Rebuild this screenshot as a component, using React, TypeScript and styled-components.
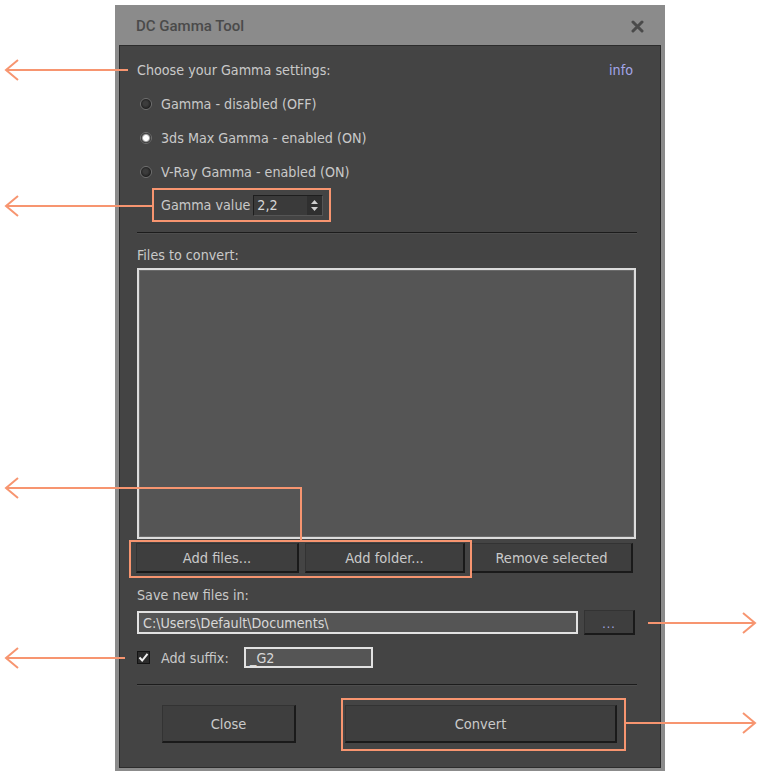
import React from 'react';
import styled, { createGlobalStyle } from 'styled-components';

const UI_FONT = '"DejaVu Sans Condensed", "DejaVu Sans", "Liberation Sans", sans-serif';

const Global = createGlobalStyle`
  html, body { margin: 0; padding: 0; background: #ffffff; }
  body { font-family: ${UI_FONT}; }
  * { box-sizing: border-box; }
`;

const Page = styled.div`
  position: relative;
  width: 761px;
  height: 775px;
  padding: 5px 0 0 115px;
`;

const Window = styled.div`
  width: 550px;
  height: 766px;
  background: #8b8b8b;
  display: flex;
  flex-direction: column;
  padding: 0 4px 3px;
`;

const TitleBar = styled.div`
  height: 40px;
  flex: none;
  display: flex;
  align-items: center;
  justify-content: space-between;
  padding: 2px 17px 0 17px;
  font-family: Roboto, "Liberation Sans", sans-serif;
  font-weight: 500;
  font-size: 15px;
  color: #4a4a4a;
`;

const Panel = styled.div`
  flex: 1;
  background: #444444;
  border: 1px solid #2c2c2c;
  padding: 16px 24px 0 17px;
  display: flex;
  flex-direction: column;
  font-size: 14.2px;
  color: #c9c9c9;
`;

const Label = styled.div<{ $mt?: number }>`
  height: 16px;
  line-height: 16px;
  margin-top: ${(p) => p.$mt ?? 0}px;
  white-space: nowrap;
`;

const HeaderRow = styled.div`
  display: flex;
  justify-content: space-between;
  height: 16px;
  line-height: 16px;
`;

const InfoLink = styled.span`
  color: #a3a6e8;
  margin-right: 3px;
`;

const RadioList = styled.div`
  margin-top: 16px;
  display: flex;
  flex-direction: column;
  gap: 14px;
`;

const RadioRow = styled.div`
  height: 20px;
  display: flex;
  align-items: center;
  gap: 9px;
  padding-left: 3px;
  white-space: nowrap;
`;

const RadioDot = styled.span<{ $on?: boolean }>`
  flex: none;
  width: 12px;
  height: 12px;
  border-radius: 50%;
  background: ${(p) =>
    p.$on
      ? 'radial-gradient(circle at 50% 50%, #ffffff 0 2.5px, #c4c4c4 3.2px, #2a2a2a 5px)'
      : 'radial-gradient(circle at 45% 45%, #3c3c3c 0 2px, #262626 5px)'};
  border: 1px solid #707070;
  box-shadow: inset 0 0 1px #000;
`;

const GammaRow = styled.div`
  margin-top: 12px;
  height: 22px;
  display: flex;
  align-items: center;
  padding-left: 24px;
  white-space: nowrap;
`;

const SpinBox = styled.div`
  margin-left: 3px;
  display: flex;
  height: 21px;
  border: 1px solid #1e1e1e;
  border-right-color: #555;
  border-bottom-color: #555;
`;

const SpinInput = styled.div`
  width: 53px;
  background: #3a3a3a;
  color: #d6d6d6;
  padding-left: 3px;
  line-height: 19px;
`;

const SpinArrows = styled.div`
  width: 15px;
  background: #2f2f2f;
  display: flex;
  align-items: center;
  justify-content: center;
`;

const Separator = styled.div<{ $mt: number }>`
  margin-top: ${(p) => p.$mt}px;
  margin-right: -1px;
  border-top: 1px solid #1c1c1c;
  border-bottom: 1px solid #4d4d4d;
`;

const ListBox = styled.div`
  margin-top: 5px;
  height: 271px;
  border: 2px solid #dcdcdc;
  outline: 1px solid #6a6a6a;
  outline-offset: -3px;
  background: #555555;
`;

const ButtonRow = styled.div`
  margin-top: 4px;
  margin-left: -1px;
  display: grid;
  grid-template-columns: 163px 160px 162px;
  column-gap: 6px;
`;

const Button = styled.button<{ $h?: number; $w?: number; $ml?: number }>`
  height: ${(p) => p.$h ?? 30}px;
  ${(p) => (p.$w ? `width: ${p.$w}px;` : '')}
  margin-left: ${(p) => p.$ml ?? 0}px;
  padding: 0;
  background: #3e3e3e;
  border: 1px solid #333333;
  border-right: 2px solid #1a1a1a;
  border-bottom: 2px solid #1a1a1a;
  color: #cacaca;
  font-family: ${UI_FONT};
  font-size: 14.5px;
`;

const DotsButton = styled(Button)`
  color: #a9aee6;
  font-size: 12px;
  letter-spacing: 1px;
  line-height: 1;
  padding-top: 4px;
`;

const PathRow = styled.div`
  margin-top: 7px;
  display: flex;
  align-items: center;
  gap: 6px;
  height: 25px;
`;

const TextField = styled.div<{ $w: number; $h: number; $ml?: number }>`
  width: ${(p) => p.$w}px;
  height: ${(p) => p.$h}px;
  margin-left: ${(p) => p.$ml ?? 0}px;
  border: 2px solid #e2e2e2;
  background: #555555;
  color: #d8d8d8;
  padding-left: 4px;
  display: flex;
  align-items: center;
  white-space: nowrap;
`;

const SuffixRow = styled.div`
  margin-top: 12px;
  height: 21px;
  display: flex;
  align-items: center;
`;

const CheckBox = styled.span`
  width: 13px;
  height: 13px;
  background: #2c2c2c;
  border: 1px solid #141414;
  display: flex;
  align-items: center;
  justify-content: center;
`;

const SuffixLabel = styled.span`
  margin-left: 11px;
  width: 71px;
  white-space: nowrap;
`;

const BottomRow = styled.div`
  margin-top: 19px;
  display: flex;
`;

const Overlay = styled.svg`
  position: absolute;
  left: 0;
  top: 0;
  pointer-events: none;
`;

const O = '#f79570';

function Annotations() {
  const leftHead = (y: number) => `M18 ${y - 10} L6 ${y} L18 ${y + 10}`;
  const rightHead = (y: number) => `M743 ${y - 10} L755 ${y} L743 ${y + 10}`;
  return (
    <Overlay width={761} height={775} viewBox="0 0 761 775">
      <g fill="none" stroke={O} strokeWidth={2}>
        <path d={`M6 70 H128`} />
        <path d={leftHead(70)} />
        <path d={`M6 206 H153`} />
        <path d={leftHead(206)} />
        <rect x={153} y={189} width={177} height={32} />
        <path d={`M6 488 H301 V541`} />
        <path d={leftHead(488)} />
        <rect x={130} y={541} width={341} height={36} />
        <path d={`M6 658 H125`} />
        <path d={leftHead(658)} />
        <path d={`M648 623 H755`} />
        <path d={rightHead(623)} />
        <rect x={342} y={699} width={283} height={51} />
        <path d={`M625 723 H755`} />
        <path d={rightHead(723)} />
      </g>
    </Overlay>
  );
}

export default function App() {
  return (
    <>
      <Global />
      <Page>
        <Window>
          <TitleBar>
            <span>DC Gamma Tool</span>
            <svg width="13" height="13" viewBox="0 0 13 13">
              <path d="M2 2 L11 11 M11 2 L2 11" stroke="#4a4a4a" strokeWidth="3" strokeLinecap="round" />
            </svg>
          </TitleBar>
          <Panel>
            <HeaderRow>
              <span>Choose your Gamma settings:</span>
              <InfoLink>info</InfoLink>
            </HeaderRow>
            <RadioList>
              <RadioRow>
                <RadioDot />
                <span>Gamma - disabled (OFF)</span>
              </RadioRow>
              <RadioRow>
                <RadioDot $on />
                <span>3ds Max Gamma - enabled (ON)</span>
              </RadioRow>
              <RadioRow>
                <RadioDot />
                <span>V-Ray Gamma - enabled (ON)</span>
              </RadioRow>
            </RadioList>
            <GammaRow>
              <span>Gamma value</span>
              <SpinBox>
                <SpinInput>2,2</SpinInput>
                <SpinArrows>
                  <svg width="9" height="15" viewBox="0 0 9 15">
                    <path d="M1 6 L4.5 2 L8 6 Z" fill="#cfcfcf" />
                    <path d="M1 9 L4.5 13 L8 9 Z" fill="#cfcfcf" />
                  </svg>
                </SpinArrows>
              </SpinBox>
            </GammaRow>
            <Separator $mt={16} />
            <Label $mt={13}>Files to convert:</Label>
            <ListBox />
            <ButtonRow>
              <Button>Add files...</Button>
              <Button>Add folder...</Button>
              <Button>Remove selected</Button>
            </ButtonRow>
            <Label $mt={14}>Save new files in:</Label>
            <PathRow>
              <TextField $w={441} $h={23}>C:\Users\Default\Documents\</TextField>
              <DotsButton $h={25} $w={51}>...</DotsButton>
            </PathRow>
            <SuffixRow>
              <CheckBox>
                <svg width="11" height="11" viewBox="0 0 11 11">
                  <path d="M1.5 5.5 L4.2 8.5 L9.5 1.8" fill="none" stroke="#f0f0f0" strokeWidth="2" />
                </svg>
              </CheckBox>
              <SuffixLabel>Add suffix:</SuffixLabel>
              <TextField $w={129} $h={21} $ml={12}>_G2</TextField>
            </SuffixRow>
            <Separator $mt={16} />
            <BottomRow>
              <Button $h={38} $w={134} $ml={25}>Close</Button>
              <Button $h={38} $w={272} $ml={49}>Convert</Button>
            </BottomRow>
          </Panel>
        </Window>
        <Annotations />
      </Page>
    </>
  );
}
